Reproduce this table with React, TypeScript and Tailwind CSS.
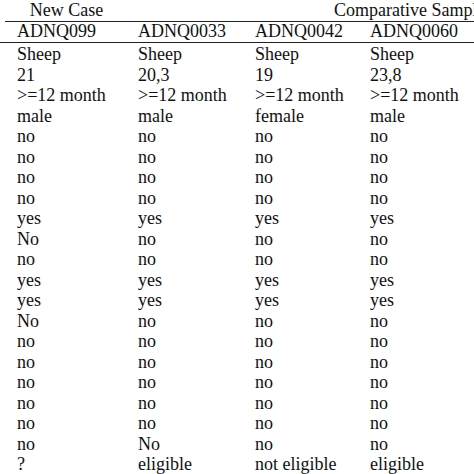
import React from "react";

const cols: string[][] = [
  ["ADNQ099", "Sheep", "21", ">=12 month", "male", "no", "no", "no", "no", "yes", "No", "no", "yes", "yes", "No", "no", "no", "no", "no", "no", "no", "?"],
  ["ADNQ0033", "Sheep", "20,3", ">=12 month", "male", "no", "no", "no", "no", "yes", "no", "no", "yes", "yes", "no", "no", "no", "no", "no", "no", "No", "eligible"],
  ["ADNQ0042", "Sheep", "19", ">=12 month", "female", "no", "no", "no", "no", "yes", "no", "no", "yes", "yes", "no", "no", "no", "no", "no", "no", "no", "not eligible"],
  ["ADNQ0060", "Sheep", "23,8", ">=12 month", "male", "no", "no", "no", "no", "yes", "no", "no", "yes", "yes", "no", "no", "no", "no", "no", "no", "no", "eligible"],
];

export default function App() {
  const rows = cols[0].slice(1).map((_, i) => cols.map((c) => c[i + 1]));
  return (
    <div
      className="w-[474px] h-[474px] overflow-hidden bg-white text-[#111] text-[18px] whitespace-nowrap"
      style={{ fontFamily: '"Liberation Serif", "Times New Roman", serif' }}
    >
      <div className="flex h-[22px] ml-[5px] border-b border-[#222] leading-[20px] overflow-hidden">
        <div className="w-[123px] shrink-0 text-center">New Case</div>
        <div className="shrink-0 pl-[206px]">Comparative Samples</div>
      </div>
      <div className="grid grid-cols-[121px_117px_115px_1fr] pl-[17px] h-[21px] border-b border-[#222] leading-[18px]">
        {cols.map((c) => (
          <div key={c[0]}>{c[0]}</div>
        ))}
      </div>
      <div className="pt-[1px] pl-[17px] leading-[20.5px]">
        {rows.map((r, i) => (
          <div key={i} className="grid grid-cols-[121px_117px_115px_1fr]">
            {r.map((v, j) => (
              <div key={j}>{v}</div>
            ))}
          </div>
        ))}
      </div>
    </div>
  );
}
